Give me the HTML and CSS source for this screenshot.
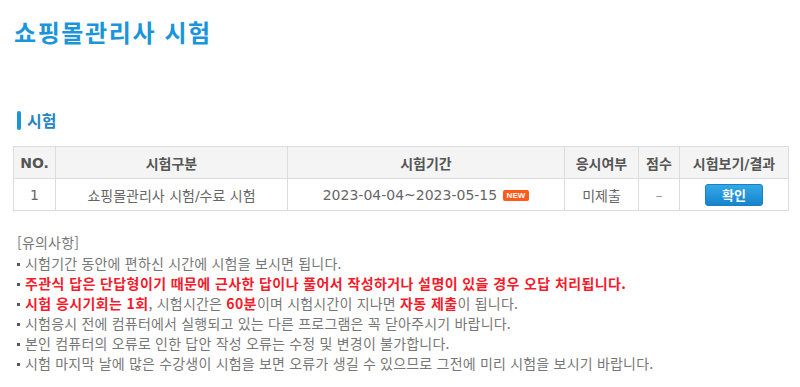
FILE: index.html
```html
<!DOCTYPE html>
<html lang="ko">
<head>
    <meta charset="UTF-8">
    <meta name="viewport" content="width=device-width, initial-scale=1.0">
    <title>쇼핑몰관리사 시험</title>
    <link rel="stylesheet" href="styles.css">
</head>
<body>

    <div class="wrap">
        <h1 class="page-title">쇼핑몰관리사 시험</h1>

        <!-- 시험 목록 -->
        <h2 class="sec-title">시험</h2>

        <table class="exam-table">
            <colgroup>
                <col class="c-no">
                <col class="c-type">
                <col class="c-period">
                <col class="c-status">
                <col class="c-score">
                <col class="c-result">
            </colgroup>
            <thead>
                <tr>
                    <th>NO.</th>
                    <th>시험구분</th>
                    <th>시험기간</th>
                    <th>응시여부</th>
                    <th>점수</th>
                    <th>시험보기/결과</th>
                </tr>
            </thead>
            <tbody>
                <tr>
                    <td>1</td>
                    <td>쇼핑몰관리사 시험/수료 시험</td>
                    <td>2023-04-04~2023-05-15 <span class="new-badge">NEW</span></td>
                    <td>미제출</td>
                    <td class="dash">–</td>
                    <td><button class="btn-check">확인</button></td>
                </tr>
            </tbody>
        </table>

        <!-- 유의사항 -->
        <div class="notice">
            <p class="notice-title">[유의사항]</p>
            <ul>
                <li>시험기간 동안에 편하신 시간에 시험을 보시면 됩니다.</li>
                <li><strong class="red">주관식 답은 단답형이기 때문에 근사한 답이나 풀어서 작성하거나 설명이 있을 경우 오답 처리됩니다.</strong></li>
                <li><strong class="red">시험 응시기회는 1회</strong>, 시험시간은 <strong class="red">60분</strong>이며 시험시간이 지나면 <strong class="red">자동 제출</strong>이 됩니다.</li>
                <li>시험응시 전에 컴퓨터에서 실행되고 있는 다른 프로그램은 꼭 닫아주시기 바랍니다.</li>
                <li>본인 컴퓨터의 오류로 인한 답안 작성 오류는 수정 및 변경이 불가합니다.</li>
                <li>시험 마지막 날에 많은 수강생이 시험을 보면 오류가 생길 수 있으므로 그전에 미리 시험을 보시기 바랍니다.</li>
            </ul>
        </div>
    </div>

</body>
</html>
```

FILE: styles.css
```css
body {
    margin: 0;
    padding: 0;
    background: #fff;
    font-family: "Noto Sans CJK KR", "Noto Sans", sans-serif;
    color: #666;
}

.wrap {
    padding: 14px 11px 0 13px;
}

.page-title {
    margin: 0 0 0 1px;
    font-size: 24px;
    line-height: 36px;
    color: #1b95d9;
    font-weight: bold;
    letter-spacing: 1.6px;
}

/* 섹션 제목 + 파란 막대 */
.sec-title {
    display: flex;
    align-items: center;
    gap: 6px;
    margin: 60px 0 0 4px;
    font-size: 16px;
    line-height: 20px;
    color: #2385c6;
    font-weight: bold;
}

.sec-title::before {
    content: "";
    width: 4px;
    height: 19px;
    border-radius: 2px;
    background: #1b95d9;
}

.exam-table {
    width: 100%;
    margin-top: 16px;
    border-collapse: collapse;
    table-layout: fixed;
    font-family: "DejaVu Sans", "Noto Sans CJK KR", sans-serif;
    font-size: 14px;
}

.c-no { width: 42px; }
.c-type { width: 232px; }
.c-period { width: 277px; }
.c-status { width: 74px; }
.c-score { width: 41px; }

.exam-table th,
.exam-table td {
    border: 1px solid #dcdcdc;
    text-align: center;
    padding: 0;
}

.exam-table th {
    height: 31px;
    background: #f4f4f4;
    color: #555;
    font-weight: bold;
}

.exam-table td {
    height: 31px;
    color: #666;
}

.exam-table td.dash {
    color: #999;
}

.new-badge {
    display: inline-block;
    vertical-align: 2px;
    margin-left: 1px;
    padding: 0 4px;
    height: 11px;
    line-height: 11px;
    font-size: 8px;
    font-weight: bold;
    color: #fff;
    background: #ff5a1a;
    border-radius: 2px;
    font-family: "Liberation Sans", sans-serif;
}

.btn-check {
    width: 58px;
    height: 22px;
    padding: 0;
    border: 1px solid #1b7fc0;
    border-radius: 3px;
    background: linear-gradient(#33a8e8, #1784cc);
    color: #fff;
    font-size: 13px;
    font-weight: bold;
    font-family: "Noto Sans CJK KR", sans-serif;
    cursor: pointer;
}

.notice {
    margin-top: 21px;
    font-size: 14px;
    line-height: 20px;
    color: #777;
    letter-spacing: 0.2px;
}

.notice-title {
    margin: 0 0 1px 4px;
}

.notice ul {
    list-style: none;
    margin: 0;
    padding: 0 0 0 4px;
}

.notice li {
    position: relative;
    padding-left: 8px;
}

.notice li::before {
    content: "";
    position: absolute;
    left: 0;
    top: 10px;
    width: 3px;
    height: 3px;
    background: #555;
}

.red {
    color: #f41b2c;
    letter-spacing: 0.4px;
}
```
